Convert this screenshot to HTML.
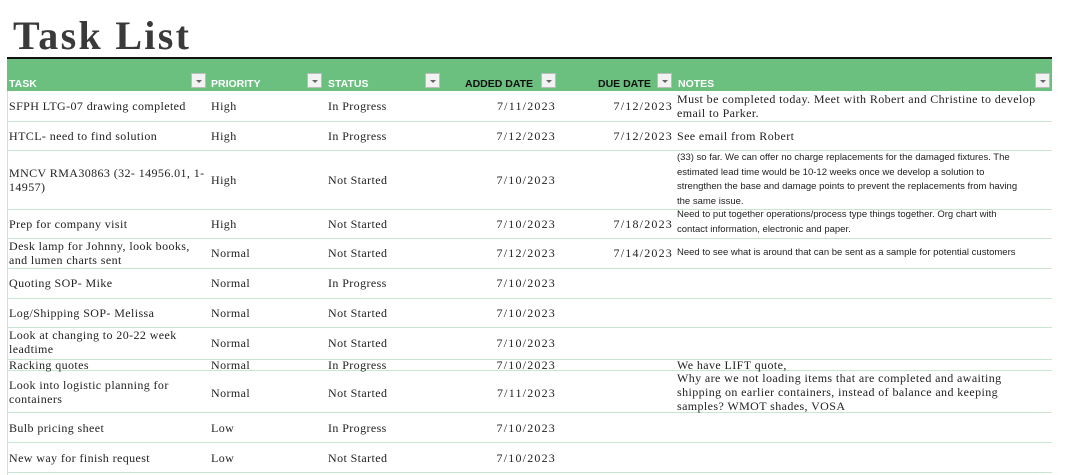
<!DOCTYPE html>
<html><head><meta charset="utf-8"><style>
body{margin:0;width:1080px;height:475px;background:#fff;position:relative;overflow:hidden;font-family:"Liberation Serif",serif;font-size:12px;color:#222;letter-spacing:0.4px}
.t{position:absolute;left:13px;top:12px;font-size:40px;font-weight:bold;color:#3a3a3a;letter-spacing:2.3px}
.bar{position:absolute;left:7px;top:57px;width:1045px;height:2px;background:#111}
.hd{position:absolute;left:7px;top:59px;width:1045px;height:32px;background:#6bbf7f}
.h{position:absolute;top:78px;font-family:"Liberation Sans",sans-serif;font-weight:bold;font-size:10.5px;color:#fff;letter-spacing:0}
.hb{color:#111}
.f{position:absolute;top:73px;width:15px;height:15px;background:#f2f2f2;border:1px solid #bbb;box-sizing:border-box}
.f:after{content:"";position:absolute;left:4px;top:6px;border-left:3px solid transparent;border-right:3px solid transparent;border-top:3px solid #666}
.ln{position:absolute;left:7px;width:1045px;height:1px;background:#c8e6d0}
.c{position:absolute;line-height:14px;white-space:nowrap}
.r{text-align:right;letter-spacing:1.2px}
.s{font-family:"Liberation Sans",sans-serif;font-size:9.5px;line-height:14.5px;letter-spacing:0}
.vl{position:absolute;left:7px;top:91px;width:1px;height:384px;background:#c8e6d0}
</style></head><body>
<div class="t">Task List</div>
<div class="bar"></div><div class="hd"></div>
<div class="h" style="left:9px">TASK</div>
<div class="h" style="left:211px">PRIORITY</div>
<div class="h" style="left:328px">STATUS</div>
<div class="h hb" style="left:465px">ADDED DATE</div>
<div class="h hb" style="left:598px">DUE DATE</div>
<div class="h" style="left:678px">NOTES</div>
<div class="f" style="left:191px"></div>
<div class="f" style="left:307px"></div>
<div class="f" style="left:425px"></div>
<div class="f" style="left:541px"></div>
<div class="f" style="left:657px"></div>
<div class="f" style="left:1035px"></div>
<div class="vl"></div>
<div class="ln" style="top:121px"></div><div class="ln" style="top:150px"></div><div class="ln" style="top:209px"></div><div class="ln" style="top:238px"></div><div class="ln" style="top:268px"></div><div class="ln" style="top:298px"></div><div class="ln" style="top:327px"></div><div class="ln" style="top:359px"></div><div class="ln" style="top:370px"></div><div class="ln" style="top:412px"></div><div class="ln" style="top:442px"></div><div class="ln" style="top:472px"></div>

<div class="c" style="left:9px;top:99px">SFPH LTG-07 drawing completed</div><div class="c" style="left:211px;top:99px">High</div><div class="c" style="left:328px;top:99px">In Progress</div><div class="c r" style="left:442px;width:114px;top:99px">7/11/2023</div><div class="c r" style="left:560px;width:113px;top:99px">7/12/2023</div><div class="c" style="left:677px;top:92px">Must be completed today. Meet with Robert and Christine to develop<br>email to Parker.</div>

<div class="c" style="left:9px;top:129px">HTCL- need to find solution</div><div class="c" style="left:211px;top:129px">High</div><div class="c" style="left:328px;top:129px">In Progress</div><div class="c r" style="left:442px;width:114px;top:129px">7/12/2023</div><div class="c r" style="left:560px;width:113px;top:129px">7/12/2023</div><div class="c" style="left:677px;top:129px">See email from Robert</div>

<div class="c" style="left:9px;top:166px">MNCV RMA30863 (32- 14956.01, 1-<br>14957)</div><div class="c" style="left:211px;top:173px">High</div><div class="c" style="left:328px;top:173px">Not Started</div><div class="c r" style="left:442px;width:114px;top:173px">7/10/2023</div><div class="c s" style="left:677px;top:151px">(33) so far. We can offer no charge replacements for the damaged fixtures. The<br>estimated lead time would be 10-12 weeks once we develop a solution to<br>strengthen the base and damage points to prevent the replacements from having<br>the same issue.</div>

<div class="c" style="left:9px;top:217px">Prep for company visit</div><div class="c" style="left:211px;top:217px">High</div><div class="c" style="left:328px;top:217px">Not Started</div><div class="c r" style="left:442px;width:114px;top:217px">7/10/2023</div><div class="c r" style="left:560px;width:113px;top:217px">7/18/2023</div><div class="c s" style="left:677px;top:208px">Need to put together operations/process type things together. Org chart with<br>contact information, electronic and paper.</div>

<div class="c" style="left:9px;top:239px">Desk lamp for Johnny, look books,<br>and lumen charts sent</div><div class="c" style="left:211px;top:246px">Normal</div><div class="c" style="left:328px;top:246px">Not Started</div><div class="c r" style="left:442px;width:114px;top:246px">7/12/2023</div><div class="c r" style="left:560px;width:113px;top:246px">7/14/2023</div><div class="c s" style="left:677px;top:246px">Need to see what is around that can be sent as a sample for potential customers</div>

<div class="c" style="left:9px;top:276px">Quoting SOP- Mike</div><div class="c" style="left:211px;top:276px">Normal</div><div class="c" style="left:328px;top:276px">In Progress</div><div class="c r" style="left:442px;width:114px;top:276px">7/10/2023</div>

<div class="c" style="left:9px;top:306px">Log/Shipping SOP- Melissa</div><div class="c" style="left:211px;top:306px">Normal</div><div class="c" style="left:328px;top:306px">Not Started</div><div class="c r" style="left:442px;width:114px;top:306px">7/10/2023</div>

<div class="c" style="left:9px;top:328px">Look at changing to 20-22 week<br>leadtime</div><div class="c" style="left:211px;top:336px">Normal</div><div class="c" style="left:328px;top:336px">Not Started</div><div class="c r" style="left:442px;width:114px;top:336px">7/10/2023</div>

<div class="c" style="left:9px;top:358px">Racking quotes</div><div class="c" style="left:211px;top:358px">Normal</div><div class="c" style="left:328px;top:358px">In Progress</div><div class="c r" style="left:442px;width:114px;top:358px">7/10/2023</div><div class="c" style="left:677px;top:358px">We have LIFT quote,</div>

<div class="c" style="left:9px;top:378px">Look into logistic planning for<br>containers</div><div class="c" style="left:211px;top:386px">Normal</div><div class="c" style="left:328px;top:386px">Not Started</div><div class="c r" style="left:442px;width:114px;top:386px">7/11/2023</div><div class="c" style="left:677px;top:371px">Why are we not loading items that are completed and awaiting<br>shipping on earlier containers, instead of balance and keeping<br>samples? WMOT shades, VOSA</div>

<div class="c" style="left:9px;top:421px">Bulb pricing sheet</div><div class="c" style="left:211px;top:421px">Low</div><div class="c" style="left:328px;top:421px">In Progress</div><div class="c r" style="left:442px;width:114px;top:421px">7/10/2023</div>

<div class="c" style="left:9px;top:451px">New way for finish request</div><div class="c" style="left:211px;top:451px">Low</div><div class="c" style="left:328px;top:451px">Not Started</div><div class="c r" style="left:442px;width:114px;top:451px">7/10/2023</div>
</body></html>
